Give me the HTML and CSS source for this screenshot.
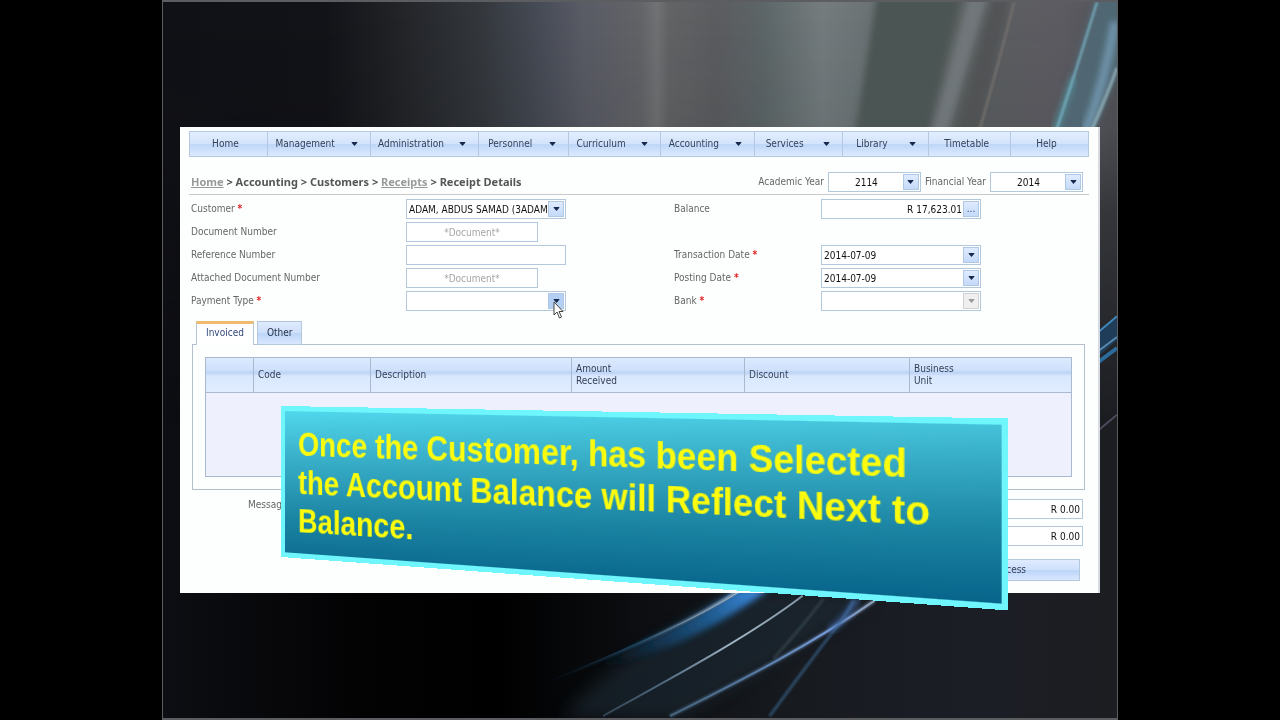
FILE: index.html
```html
<!DOCTYPE html>
<html lang="en">
<head>
    <meta charset="UTF-8">
    <meta name="viewport" content="width=device-width, initial-scale=1.0">
    <title>Receipt Details</title>
    <link rel="stylesheet" href="styles.css">
</head>
<body>

<div class="slide">
    <svg class="backdrop" viewBox="0 0 956 720" preserveAspectRatio="none" aria-hidden="true">
        <defs>
            <linearGradient id="base">
                <stop offset="0" stop-color="#0d0e13"/>
                <stop offset=".2" stop-color="#030304"/>
                <stop offset=".35" stop-color="#000"/>
                <stop offset=".5" stop-color="#0c0e11"/>
                <stop offset=".66" stop-color="#171a1f"/>
                <stop offset=".85" stop-color="#1c1e26"/>
                <stop offset="1" stop-color="#1c1d21"/>
            </linearGradient>
            <linearGradient id="sheen">
                <stop offset="0" stop-color="#101116"/>
                <stop offset=".17" stop-color="#121318"/>
                <stop offset=".25" stop-color="#222428"/>
                <stop offset=".33" stop-color="#33373c"/>
                <stop offset=".39" stop-color="#454a54"/>
                <stop offset=".44" stop-color="#5a5c66"/>
                <stop offset=".5" stop-color="#636468"/>
                <stop offset=".518" stop-color="#717274"/>
                <stop offset=".53" stop-color="#636466"/>
                <stop offset=".58" stop-color="#5c5d60"/>
                <stop offset=".63" stop-color="#5d6668"/>
                <stop offset=".69" stop-color="#747c7e"/>
                <stop offset=".74" stop-color="#6b7375"/>
                <stop offset=".84" stop-color="#5b6060"/>
                <stop offset=".94" stop-color="#5e5c63"/>
                <stop offset="1" stop-color="#505256"/>
            </linearGradient>
            <linearGradient id="fade" x2="0" y2="1">
                <stop offset="0" stop-color="#fff"/>
                <stop offset=".3" stop-color="#e6e6e6"/>
                <stop offset=".5" stop-color="#777"/>
                <stop offset="1" stop-color="#000"/>
            </linearGradient>
            <linearGradient id="trailA" gradientUnits="userSpaceOnUse" x1="576" y1="594" x2="378" y2="687">
                <stop offset="0" stop-color="#b4c0cc"/>
                <stop offset=".25" stop-color="#7f95aa"/>
                <stop offset=".5" stop-color="#24506f"/>
                <stop offset="1" stop-color="#0a1620" stop-opacity="0"/>
            </linearGradient>
            <linearGradient id="band" gradientUnits="userSpaceOnUse" x1="600" y1="594" x2="440" y2="680">
                <stop offset="0" stop-color="#3b8be0"/>
                <stop offset=".35" stop-color="#1d5687"/>
                <stop offset=".7" stop-color="#102a40"/>
                <stop offset="1" stop-color="#0a1620" stop-opacity="0"/>
            </linearGradient>
            <linearGradient id="trailB" gradientUnits="userSpaceOnUse" x1="641" y1="597" x2="441" y2="717">
                <stop offset="0" stop-color="#8fa3b5"/>
                <stop offset=".35" stop-color="#b0c4d4"/>
                <stop offset=".7" stop-color="#56728a"/>
                <stop offset="1" stop-color="#344656"/>
            </linearGradient>
            <linearGradient id="trailC" gradientUnits="userSpaceOnUse" x1="713" y1="603" x2="508" y2="717">
                <stop offset="0" stop-color="#93a6c0"/>
                <stop offset=".25" stop-color="#7ba2e0"/>
                <stop offset=".6" stop-color="#5a7fa8"/>
                <stop offset="1" stop-color="#48657f"/>
            </linearGradient>
            <mask id="fadeMask"><rect width="956" height="420" fill="url(#fade)"/></mask>
            <filter id="soft1"><feGaussianBlur stdDeviation="1"/></filter>
            <filter id="soft3"><feGaussianBlur stdDeviation="3"/></filter>
            <filter id="soft8" x="-50%" y="-50%" width="200%" height="200%"><feGaussianBlur stdDeviation="8"/></filter>
        </defs>
        <rect width="956" height="720" fill="url(#base)"/>
        <rect width="956" height="420" fill="url(#sheen)" mask="url(#fadeMask)"/>

        <!-- hanging curtains of light, top right -->
        <path d="M716 -10H800L764 140H692Z" fill="#4b5552" filter="url(#soft3)"/>
        <path d="M808 -10H828L784 140H768Z" fill="#767d81" opacity=".8" filter="url(#soft3)"/>
        <path d="M834 -10H850L814 140H794Z" fill="#4f5152" opacity=".8" filter="url(#soft3)"/>
        <path d="M853 0Q838 60 818 130" stroke="#77726f" stroke-width="2" fill="none" filter="url(#soft1)"/>
        <path d="M936 -10H960V66L928 140H890Z" fill="#50707e" opacity=".7" filter="url(#soft3)"/>
        <path d="M913 75L892 135" stroke="#4fa0a8" stroke-width="6" opacity=".6" fill="none" filter="url(#soft3)"/>
        <path d="M954 20Q944 80 924 132" stroke="#7ba4c0" stroke-width="9" opacity=".75" fill="none" filter="url(#soft3)"/>
        <path d="M936 0Q916 66 895 130" stroke="#7cb4c8" stroke-width="2" fill="none" filter="url(#soft1)"/>
        <path d="M956 66Q946 94 930 130" stroke="#8ba9b3" stroke-width="3" fill="none" filter="url(#soft1)"/>

        <!-- streaks beside the window -->
        <path d="M938 332L956 317V340L938 356Z" fill="#1f3c59"/>
        <path d="M936 333L956 316" stroke="#4088bb" stroke-width="2"/>
        <path d="M936 352L956 337" stroke="#5688b0" stroke-width="2"/>
        <path d="M936 363L956 348" stroke="#2b6c9f" stroke-width="4"/>
        <path d="M936 432L956 415" stroke="#4c4a5a" stroke-width="2"/>

        <!-- sweeping trails, bottom -->
        <path d="M576 590C520 630 450 660 400 720H520L713 600Z" fill="#1d2a35" opacity=".6" filter="url(#soft8)"/>
        <path d="M576 590C530 622 480 644 420 672C480 664 540 640 608 590Z" fill="url(#band)" filter="url(#soft3)"/>
        <path d="M580 590C530 622 480 646 378 687" stroke="url(#trailA)" stroke-width="2" fill="none" filter="url(#soft1)"/>
        <path d="M576 594C530 622 480 644 378 687" stroke="url(#trailA)" fill="none"/>
        <path d="M641 597C590 636 520 674 441 718" stroke="url(#trailB)" stroke-width="2" opacity=".9" fill="none"/>
        <path d="M713 602C650 646 580 682 508 718" stroke="url(#trailC)" stroke-width="4" opacity=".5" fill="none" filter="url(#soft1)"/>
        <path d="M713 602C650 646 580 682 508 718" stroke="url(#trailC)" stroke-width="2" opacity=".9" fill="none"/>
        <path d="M692 602Q684 616 680 622Q645 667 608 718" stroke="#34597a" stroke-width="3" opacity=".8" fill="none" filter="url(#soft1)"/>
        <path d="M696 598Q690 614 668 632" stroke="#4f80d0" stroke-width="6" opacity=".6" fill="none" filter="url(#soft3)"/>
        <path d="M662 600Q636 634 612 660" stroke="#39474f" stroke-width="3" opacity=".7" fill="none" filter="url(#soft1)"/>
    </svg>

    <main class="window">
        <nav class="menu">
            <a href="#"><span>Home</span></a>
            <a href="#"><span>Management</span><svg class="caret" viewBox="0 0 7 5"><path d="M0 0h7v1L3.500 5 0 1z"/></svg></a>
            <a href="#"><span>Administration</span><svg class="caret" viewBox="0 0 7 5"><path d="M0 0h7v1L3.500 5 0 1z"/></svg></a>
            <a href="#"><span>Personnel</span><svg class="caret" viewBox="0 0 7 5"><path d="M0 0h7v1L3.500 5 0 1z"/></svg></a>
            <a href="#"><span>Curriculum</span><svg class="caret" viewBox="0 0 7 5"><path d="M0 0h7v1L3.500 5 0 1z"/></svg></a>
            <a href="#"><span>Accounting</span><svg class="caret" viewBox="0 0 7 5"><path d="M0 0h7v1L3.500 5 0 1z"/></svg></a>
            <a href="#"><span>Services</span><svg class="caret" viewBox="0 0 7 5"><path d="M0 0h7v1L3.500 5 0 1z"/></svg></a>
            <a href="#"><span>Library</span><svg class="caret" viewBox="0 0 7 5"><path d="M0 0h7v1L3.500 5 0 1z"/></svg></a>
            <a href="#"><span>Timetable</span></a>
            <a href="#"><span>Help</span></a>
        </nav>

        <div class="topbar">
            <div class="breadcrumb"><a href="#">Home</a> &gt; Accounting &gt; Customers &gt; <a href="#">Receipts</a> &gt; Receipt Details</div>
            <div class="years">
                <label for="academic">Academic Year</label>
                <div class="combo year">
                    <select id="academic"><option>2114</option></select>
                    <span class="drop"><svg class="caret" viewBox="0 0 7 5"><path d="M0 0h7v1L3.500 5 0 1z"/></svg></span>
                </div>
                <label for="financial">Financial Year</label>
                <div class="combo year">
                    <select id="financial"><option>2014</option></select>
                    <span class="drop"><svg class="caret" viewBox="0 0 7 5"><path d="M0 0h7v1L3.500 5 0 1z"/></svg></span>
                </div>
            </div>
        </div>

        <form class="details">
            <label for="customer">Customer <b>*</b></label>
            <div class="combo">
                <select id="customer"><option>ADAM, ABDUS SAMAD (3ADAM)</option></select>
                <span class="drop"><svg class="caret" viewBox="0 0 7 5"><path d="M0 0h7v1L3.500 5 0 1z"/></svg></span>
            </div>
            <label for="balance">Balance</label>
            <div class="combo amount">
                <input id="balance" type="text" value="R 17,623.01">
                <button type="button" class="drop">...</button>
            </div>

            <label for="docNumber">Document Number</label>
            <div class="combo short"><input id="docNumber" type="text" placeholder="*Document*"></div>

            <label class="first" for="refNumber">Reference Number</label>
            <div class="combo"><input id="refNumber" type="text"></div>
            <label for="transDate">Transaction Date <b>*</b></label>
            <div class="combo">
                <input id="transDate" type="text" value="2014-07-09">
                <button type="button" class="drop" aria-label="Pick date"><svg class="caret" viewBox="0 0 7 5"><path d="M0 0h7v1L3.500 5 0 1z"/></svg></button>
            </div>

            <label for="attNumber">Attached Document Number</label>
            <div class="combo short"><input id="attNumber" type="text" placeholder="*Document*"></div>
            <label for="postDate">Posting Date <b>*</b></label>
            <div class="combo">
                <input id="postDate" type="text" value="2014-07-09">
                <button type="button" class="drop" aria-label="Pick date"><svg class="caret" viewBox="0 0 7 5"><path d="M0 0h7v1L3.500 5 0 1z"/></svg></button>
            </div>

            <label for="payType">Payment Type <b>*</b></label>
            <div class="combo">
                <select id="payType"><option></option></select>
                <span class="drop hot"><svg class="caret" viewBox="0 0 7 5"><path d="M0 0h7v1L3.500 5 0 1z"/></svg></span>
                <svg class="pointer" viewBox="0 0 11 18" aria-hidden="true"><path d="M1 1v13l3-3 2.500 6 2-1-2.500-5.500H10z" fill="#fff" stroke="#444"/></svg>
            </div>
            <label for="bank">Bank <b>*</b></label>
            <div class="combo">
                <select id="bank" disabled><option></option></select>
                <span class="drop off"><svg class="caret" viewBox="0 0 7 5"><path d="M0 0h7v1L3.500 5 0 1z"/></svg></span>
            </div>
        </form>

        <div class="tabs">
            <button type="button" class="tab active">Invoiced</button>
            <button type="button" class="tab">Other</button>
        </div>
        <div class="panel">
            <table class="grid">
                <colgroup>
                    <col class="col-tick"><col class="col-code"><col class="col-desc">
                    <col class="col-amount"><col class="col-disc"><col class="col-unit">
                </colgroup>
                <thead>
                    <tr>
                        <th></th>
                        <th>Code</th>
                        <th>Description</th>
                        <th>Amount<br>Received</th>
                        <th>Discount</th>
                        <th>Business<br>Unit</th>
                    </tr>
                </thead>
                <tbody>
                    <tr><td colspan="6"></td></tr>
                </tbody>
            </table>
        </div>

        <div class="footer">
            <span class="message">Message</span>
            <div class="totals">
                <div class="combo amount"><input type="text" value="R 0.00" aria-label="Total"></div>
                <div class="combo amount"><input type="text" value="R 0.00" aria-label="Remaining"></div>
                <button type="button" class="process">Process</button>
            </div>
        </div>
    </main>

    <div class="callout">Once the Customer, has been Selected<br>the Account Balance will Reflect Next to<br>Balance.</div>
</div>

</body>
</html>
```
FILE: styles.css
```css
* {
    box-sizing: border-box;
}
body {
    margin: 0;
    background: #000;
    font-family: "DejaVu Sans Condensed", "DejaVu Sans", sans-serif;
    font-size: 10px;
    line-height: 12px;
    color: #666;
}
input, select, button {
    font: inherit;
    color: #111;
    margin: 0;
}
.slide {
    position: relative;
    max-width: 956px;
    min-height: 100vh;
    margin: 0 auto;
    padding: 127px 18px 0;
    overflow: hidden;
    perspective: 1353px;
}
.backdrop {
    position: absolute;
    inset: 0;
    width: 100%;
    height: 100%;
    border: 1px solid #5c5d60;
    border-width: 2px 1px;
}
.window {
    position: relative;
    background: #fdfefe;
    border-right: 2px solid #d5dbe0;
    padding: 4px 9px 12px;
}

/* main menu */
.menu {
    display: grid;
    grid-template-columns: 78fr 103fr 109fr 90fr 92fr 94fr 88fr 87fr 82fr 77fr;
    height: 26px;
    border: 1px solid #b4c9df;
    background: linear-gradient(#e3eeff, #d3e3fb 48%, #bfd7f8 52%, #dceaff);
}
.menu a {
    display: flex;
    align-items: center;
    padding: 0 8px 0 2px;
    color: #333f55;
    text-decoration: none;
    border-right: 1px solid #b4c9df;
}
.menu a:last-child {
    border-right: none;
}
.menu span {
    flex: 1;
    text-align: center;
}
.menu .caret {
    margin: 0 4px 0 10px;
}
.caret {
    width: 7px;
    height: 4px;
    fill: #16294d;
}

/* breadcrumb and years */
.topbar {
    display: flex;
    justify-content: space-between;
    align-items: center;
    margin-top: 15px;
    padding: 0 6px 2px 2px;
    border-bottom: 1px solid #c9c9c9;
}
.breadcrumb {
    font: bold 11px/12px "Noto Sans", sans-serif;
    color: #555;
}
.breadcrumb a {
    color: #999;
}
.years {
    display: flex;
    align-items: center;
    gap: 4px;
}

/* fields */
.combo {
    position: relative;
    display: flex;
    width: 160px;
    height: 20px;
    padding: 1px;
    border: 1px solid #b4c8db;
    background: #fff;
}
.combo input,
.combo select {
    flex: 1;
    min-width: 0;
    padding: 1px 1px 0;
    border: none;
    background: none;
    appearance: none;
    outline: none;
}
.combo.short {
    width: 132px;
}
.combo.short input {
    text-align: center;
}
.combo.short input::placeholder {
    color: #a5a5a5;
}
.combo.year {
    width: 93px;
}
.combo.year select {
    text-align: center;
    text-align-last: center;
}
.combo.amount input {
    text-align: right;
}
.drop {
    display: flex;
    align-items: center;
    justify-content: center;
    width: 16px;
    padding: 0;
    border: 1px solid #b0c8e6;
    background: linear-gradient(#dfebff, #c4daf8);
    color: #2a4a80;
}
.drop.hot {
    background: #b4cff4;
}
.drop.off {
    border-color: #d2d2d2;
    background: #efefef;
}
.drop.off .caret {
    fill: #999;
}
.pointer {
    position: absolute;
    top: 9px;
    left: 146px;
    width: 11px;
    height: 18px;
}
.details {
    display: grid;
    grid-template-columns: 215px 268px 147px 1fr;
    row-gap: 3px;
    align-items: center;
    padding: 4px 2px 0;
}
.details .first {
    grid-column: 1;
}
.details b {
    color: #d22;
}

/* tabs */
.tabs {
    display: flex;
    gap: 3px;
    margin: 10px 0 -1px 7px;
    position: relative;
}
.tab {
    height: 24px;
    padding: 0 9px;
    border: 1px solid #b4c8db;
    background: linear-gradient(#dfebff, #cfe0fa 48%, #bcd5f8 52%, #d9e7ff);
    color: #222f45;
}
.tab.active {
    padding-bottom: 4px;
    border-top: 3px solid #f0bb6c;
    border-bottom: none;
    background: #fff;
    color: #334a7c;
}
.panel {
    margin: 0 4px 0 3px;
    padding: 12px;
    border: 1px solid #b3bfcc;
}
.grid {
    width: 100%;
    border-collapse: collapse;
    table-layout: fixed;
    background: #eef0fd;
}
.grid th {
    height: 35px;
    padding: 0 4px;
    border: 1px solid #a8bad0;
    background: linear-gradient(#dce9ff, #d0e1fb 32%, #bdd4f5 42%, #dae8ff 52%, #e0ecff);
    color: #333f55;
    font-weight: normal;
    text-align: left;
}
.grid td {
    height: 84px;
    border: 1px solid #a8bad0;
}
.col-tick { width: 48px; }
.col-code { width: 117px; }
.col-desc { width: 201px; }
.col-amount { width: 173px; }
.col-disc { width: 165px; }

/* totals */
.footer {
    display: flex;
    justify-content: space-between;
    padding: 9px 6px 0 59px;
}
.totals {
    display: flex;
    flex-direction: column;
    align-items: flex-end;
    gap: 7px;
}
.process {
    width: 142px;
    height: 22px;
    margin: 6px 3px 0 0;
    border: 1px solid #b4c8db;
    background: linear-gradient(#dfebff, #cfe0fa 48%, #bcd5f8 52%, #d9e7ff);
    color: #333f55;
}

/* tilted note over the form */
.callout {
    position: absolute;
    top: 406px;
    left: 119px;
    width: 710px;
    height: 151px;
    padding: 14px 16px;
    border: 5px solid #6ef6fc;
    background: linear-gradient(178deg, #50d8ec, #3cb4cd 25%, #1b84a3 65%, #07648a);
    color: #fcfc0c;
    font: bold 33px/38px "Liberation Sans", Arial, sans-serif;
    white-space: nowrap;
    transform-origin: left center;
    transform: rotateY(-24deg);
}
```
